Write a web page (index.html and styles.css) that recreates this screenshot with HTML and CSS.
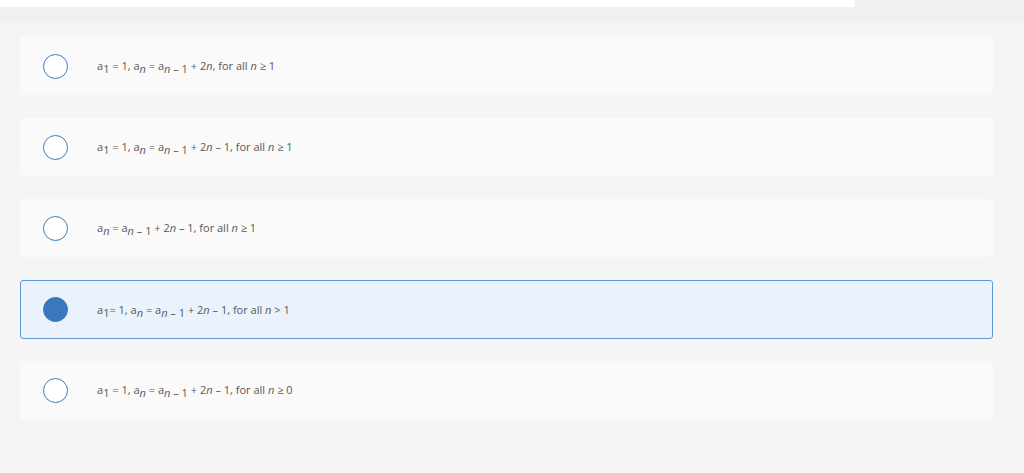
FILE: index.html
```html
<!DOCTYPE html>
<html>
<head>
<meta charset="utf-8">
<link rel="stylesheet" href="styles.css">
</head>
<body>
<div class="topbar"><div class="topbar-white"></div></div>
<main class="options">
  <label class="option">
    <span class="radio"></span>
    <span class="text"><span class="v">a</span><sub>1</sub> = 1, <span class="v">a</span><sub><i>n</i></sub> = <span class="v">a</span><sub><i>n</i> – 1</sub> + 2<i>n</i>, for all <i>n</i> ≥ 1</span>
  </label>
  <label class="option">
    <span class="radio"></span>
    <span class="text"><span class="v">a</span><sub>1</sub> = 1, <span class="v">a</span><sub><i>n</i></sub> = <span class="v">a</span><sub><i>n</i> – 1</sub> + 2<i>n</i> – 1, for all <i>n</i> ≥ 1</span>
  </label>
  <label class="option">
    <span class="radio"></span>
    <span class="text"><span class="v">a</span><sub><i>n</i></sub> = <span class="v">a</span><sub><i>n</i> – 1</sub> + 2<i>n</i> – 1, for all <i>n</i> ≥ 1</span>
  </label>
  <label class="option selected">
    <span class="radio"></span>
    <span class="text"><span class="v">a</span><sub>1</sub>= 1, <span class="v">a</span><sub><i>n</i></sub> = <span class="v">a</span><sub><i>n</i> – 1</sub> + 2<i>n</i> – 1, for all <i>n</i> &gt; 1</span>
  </label>
  <label class="option">
    <span class="radio"></span>
    <span class="text"><span class="v">a</span><sub>1</sub> = 1, <span class="v">a</span><sub><i>n</i></sub> = <span class="v">a</span><sub><i>n</i> – 1</sub> + 2<i>n</i> – 1, for all <i>n</i> ≥ 0</span>
  </label>
</main>
</body>
</html>
```
FILE: styles.css
```css
html, body {
  margin: 0;
  padding: 0;
}
body {
  background: #f5f5f5;
  font-family: "Open Sans", "Noto Sans", sans-serif;
  width: 1024px;
  height: 473px;
  overflow: hidden;
}
.topbar {
  height: 23px;
  background: #f0f0f0;
}
.topbar-white {
  width: 855px;
  height: 7px;
  background: #ffffff;
}
.options {
  display: flex;
  flex-direction: column;
  gap: 23px;
  padding: 14px 31px 0 20px;
}
.option {
  box-sizing: border-box;
  height: 58px;
  background: #fafafa;
  border-radius: 3px;
  display: flex;
  align-items: center;
  padding-left: 22px;
  gap: 29px;
  border: 1px solid transparent;
}
.option.selected {
  background: #eaf2fb;
  border-color: #5f98d8;
  height: 59px;
  margin-bottom: -1px;
}
.radio {
  box-sizing: border-box;
  width: 25px;
  height: 25px;
  border-radius: 50%;
  border: 1.3px solid #3f7cbf;
  background: #ffffff;
  flex: none;
}
.selected .radio {
  background: #3a77bd;
  border-color: #3a77bd;
}
.text {
  font-size: 11px;
  color: #585858;
  white-space: nowrap;
  margin-top: -1px;
  letter-spacing: 0;
}
.text i {
  font-style: italic;
}
.text sub {
  font-size: 11px;
  vertical-align: -3px;
  line-height: 0;
}
```
